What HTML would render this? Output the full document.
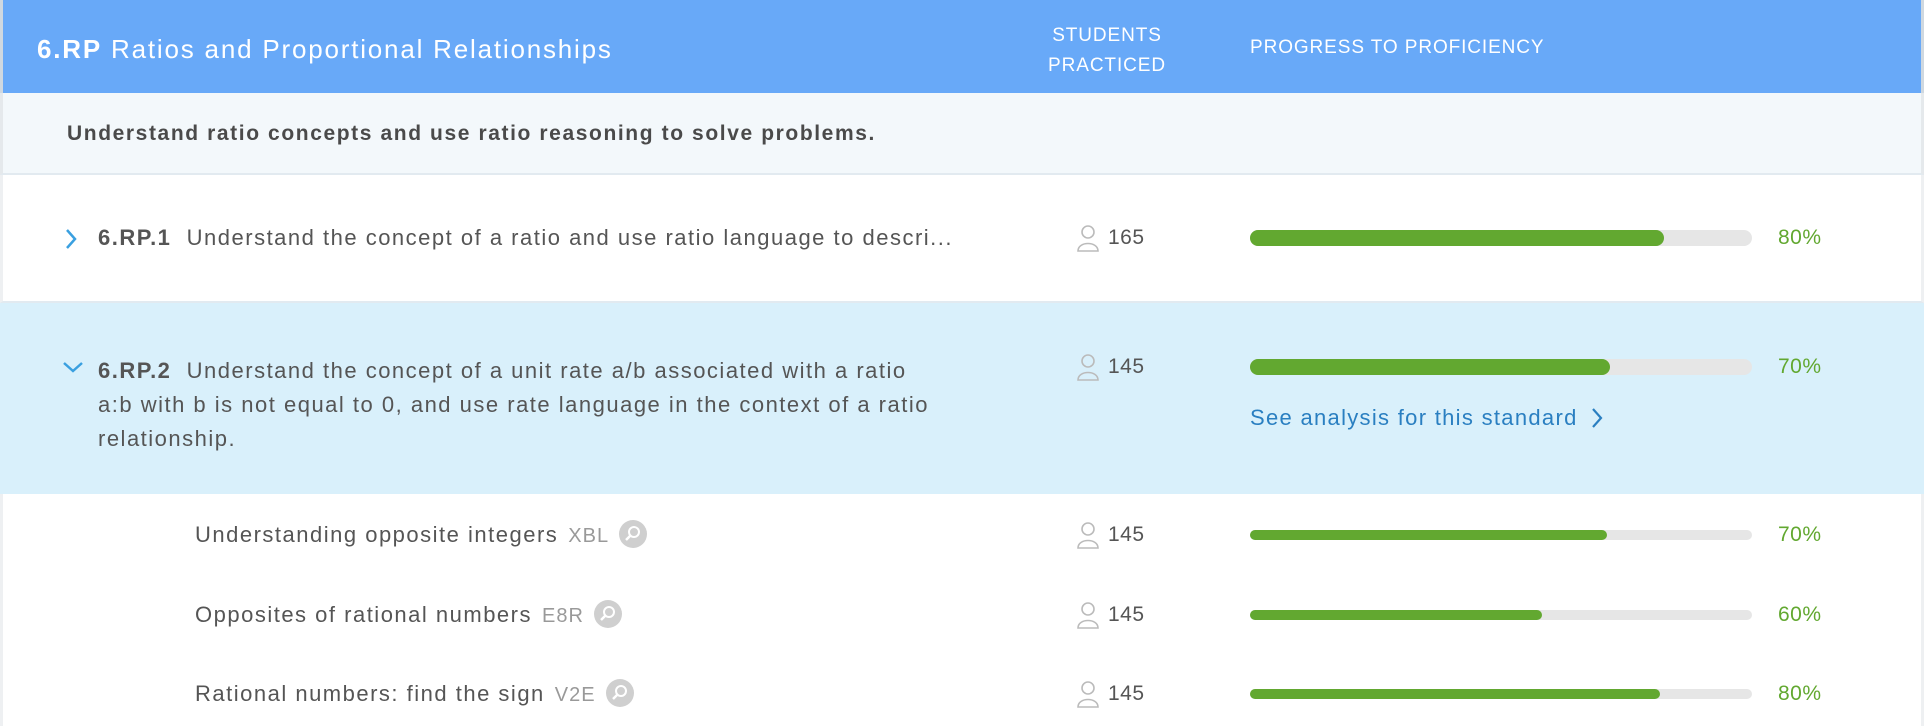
<!DOCTYPE html>
<html><head><meta charset="utf-8"><style>
*{margin:0;padding:0;box-sizing:border-box}
body{width:1924px;height:726px;overflow:hidden;background:#fff;font-family:"Liberation Sans",sans-serif;color:#555;position:relative}
.abs{position:absolute;white-space:nowrap}
.hdr{position:absolute;left:0;top:0;width:1924px;height:93px;background:#68a9f8;border-left:3px solid #cfd8e0;border-right:3px solid #cfd8e0}
.sub{position:absolute;left:0;top:93px;width:1924px;height:82px;background:#f3f8fb;border-bottom:2px solid #e2eaf0;border-left:3px solid #e5e9ec;border-right:3px solid #e5e9ec}
.r1{position:absolute;left:0;top:175px;width:1924px;height:128px;background:#fff;border-bottom:2px solid #e2eaf0;border-left:3px solid #eef0f2;border-right:3px solid #eef0f2}
.r2{position:absolute;left:0;top:303px;width:1924px;height:191px;background:#d9f0fb}
.rest{position:absolute;left:0;top:494px;width:1924px;height:232px;border-left:3px solid #eef0f2;border-right:3px solid #eef0f2}
.bar{position:absolute;left:1250px;width:502px;background:#e6e6e6;border-radius:8px}
.bar i{display:block;height:100%;background:#62a830;border-radius:8px}
.pct{position:absolute;left:1778px;color:#62a830;font-size:21px;letter-spacing:0.5px}
.num{position:absolute;left:1108px;font-size:21px;color:#555;letter-spacing:0.5px}
.t{font-size:22px;letter-spacing:1.5px}
.mag{display:inline-block;width:28px;height:28px;border-radius:50%;background:#cfcfcf;vertical-align:middle;margin-left:10px;position:relative;top:-2px}
.code{color:#999;font-size:20px;margin-left:10px;letter-spacing:1px}
</style></head><body>
<div class="hdr"></div>
<div class="abs" style="left:37px;top:34px;color:#fff;font-size:26px;letter-spacing:1.8px"><b>6.RP</b>&nbsp;Ratios and Proportional Relationships</div>
<div class="abs" style="left:1045px;top:21px;width:124px;text-align:center;color:#fff;font-size:19px;line-height:30px;letter-spacing:0.9px">STUDENTS<br>PRACTICED</div>
<div class="abs" style="left:1250px;top:37px;color:#fff;font-size:19px;letter-spacing:0.9px">PROGRESS TO PROFICIENCY</div>

<div class="sub"></div>
<div class="abs" style="left:67px;top:122px;font-size:21px;font-weight:bold;color:#4a4a4a;letter-spacing:1.6px">Understand ratio concepts and use ratio reasoning to solve problems.</div>

<div class="r1"></div>
<svg class="abs" style="left:64px;top:228px" width="14" height="22"><path d="M3 2 L11 11 L3 20" fill="none" stroke="#3aa0e0" stroke-width="2.5"/></svg>
<div class="abs t" style="left:98px;top:225px"><b>6.RP.1</b>&nbsp; Understand the concept of a ratio and use ratio language to descri...</div>
<svg class="abs" style="left:1076px;top:223px" width="24" height="30"><circle cx="12" cy="9" r="6" fill="none" stroke="#bbb" stroke-width="1.6"/><path d="M2 28 C2 18 22 18 22 28 Z" fill="none" stroke="#bbb" stroke-width="1.6"/></svg>
<div class="num" style="top:226px">165</div>
<div class="bar" style="top:230px;height:16px"><i style="width:414px"></i></div>
<div class="pct" style="top:226px">80%</div>

<div class="r2"></div>
<svg class="abs" style="left:62px;top:360px" width="22" height="14"><path d="M2 3 L11 11 L20 3" fill="none" stroke="#3aa0e0" stroke-width="2.5"/></svg>
<div class="abs t" style="left:98px;top:354px;line-height:34px;width:950px"><b>6.RP.2</b>&nbsp; Understand the concept of a unit rate a/b associated with a ratio<br>a:b with b is not equal to 0, and use rate language in the context of a ratio<br>relationship.</div>
<svg class="abs" style="left:1076px;top:352px" width="24" height="30"><circle cx="12" cy="9" r="6" fill="none" stroke="#bbb" stroke-width="1.6"/><path d="M2 28 C2 18 22 18 22 28 Z" fill="none" stroke="#bbb" stroke-width="1.6"/></svg>
<div class="num" style="top:355px">145</div>
<div class="bar" style="top:359px;height:16px"><i style="width:360px"></i></div>
<div class="pct" style="top:355px">70%</div>
<div class="abs" style="left:1250px;top:405px;color:#2a7fc1;font-size:22px;letter-spacing:1.3px">See analysis for this standard</div>
<svg class="abs" style="left:1590px;top:407px" width="14" height="22"><path d="M3 2 L11 11 L3 20" fill="none" stroke="#2a7fc1" stroke-width="2.2"/></svg>

<div class="rest"></div>
<div class="abs t" style="left:195px;top:522px">Understanding opposite integers<span class="code">XBL</span><span class="mag"><svg width="28" height="28"><circle cx="15" cy="12" r="5" fill="none" stroke="#fff" stroke-width="2"/><path d="M11 16 L7 20" stroke="#fff" stroke-width="2.5"/></svg></span></div>
<svg class="abs" style="left:1076px;top:520px" width="24" height="30"><circle cx="12" cy="9" r="6" fill="none" stroke="#bbb" stroke-width="1.6"/><path d="M2 28 C2 18 22 18 22 28 Z" fill="none" stroke="#bbb" stroke-width="1.6"/></svg>
<div class="num" style="top:523px">145</div>
<div class="bar" style="top:530px;height:10px"><i style="width:357px"></i></div>
<div class="pct" style="top:523px">70%</div>

<div class="abs t" style="left:195px;top:602px">Opposites of rational numbers<span class="code">E8R</span><span class="mag"><svg width="28" height="28"><circle cx="15" cy="12" r="5" fill="none" stroke="#fff" stroke-width="2"/><path d="M11 16 L7 20" stroke="#fff" stroke-width="2.5"/></svg></span></div>
<svg class="abs" style="left:1076px;top:600px" width="24" height="30"><circle cx="12" cy="9" r="6" fill="none" stroke="#bbb" stroke-width="1.6"/><path d="M2 28 C2 18 22 18 22 28 Z" fill="none" stroke="#bbb" stroke-width="1.6"/></svg>
<div class="num" style="top:603px">145</div>
<div class="bar" style="top:610px;height:10px"><i style="width:292px"></i></div>
<div class="pct" style="top:603px">60%</div>

<div class="abs t" style="left:195px;top:681px">Rational numbers: find the sign<span class="code">V2E</span><span class="mag"><svg width="28" height="28"><circle cx="15" cy="12" r="5" fill="none" stroke="#fff" stroke-width="2"/><path d="M11 16 L7 20" stroke="#fff" stroke-width="2.5"/></svg></span></div>
<svg class="abs" style="left:1076px;top:679px" width="24" height="30"><circle cx="12" cy="9" r="6" fill="none" stroke="#bbb" stroke-width="1.6"/><path d="M2 28 C2 18 22 18 22 28 Z" fill="none" stroke="#bbb" stroke-width="1.6"/></svg>
<div class="num" style="top:682px">145</div>
<div class="bar" style="top:689px;height:10px"><i style="width:410px"></i></div>
<div class="pct" style="top:682px">80%</div>
</body></html>
